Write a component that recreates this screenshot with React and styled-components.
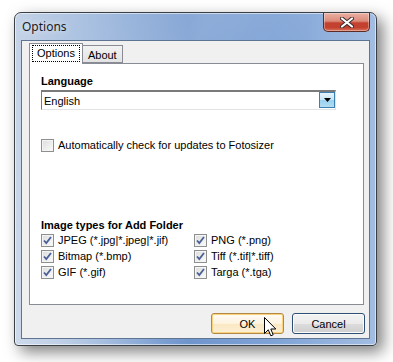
import React from 'react';
import styled, { createGlobalStyle } from 'styled-components';

const Global = createGlobalStyle`
  html, body { margin: 0; padding: 0; background: #fff; }
  body { font-family: "Liberation Sans", Arial, sans-serif; font-size: 11px; color: #000; }
`;

const Page = styled.div`
  padding: 12px 0 0 14px;
  height: 362px;
  box-sizing: border-box;
  overflow: hidden;
`;

const Window = styled.div`
  position: relative;
  width: 363px;
  height: 334px;
  box-sizing: border-box;
  border: 1px solid #3b3f46;
  border-radius: 7px 7px 4px 4px;
  background:
    linear-gradient(115deg, rgba(255,255,255,0) 0%, rgba(255,255,255,0.2) 38%, rgba(255,255,255,0) 58%),
    linear-gradient(90deg, #c4d3e7 0%, #9fb9dd 22%, #6f95cd 48%, #7fa3d6 72%, #a3bde2 100%);
  box-shadow: inset 0 0 0 1px rgba(255,255,255,0.55), 6px 6px 15px rgba(0,0,0,0.5);
  display: flex;
  flex-direction: column;
  padding: 0 6px 6px 6px;
`;

const TitleBar = styled.div`
  height: 28px;
  display: flex;
  align-items: flex-start;
  justify-content: space-between;
`;

const Title = styled.span`
  font-family: "Noto Sans", "Open Sans", sans-serif;
  font-size: 12px;
  color: #1a1a1a;
  margin: 5px 0 0 1px;
  text-shadow: 0 0 6px rgba(255,255,255,0.9);
`;

const CloseButton = styled.div`
  width: 47px;
  height: 19px;
  box-sizing: border-box;
  border: 1px solid #5e2a24;
  border-top: none;
  border-radius: 0 0 5px 5px;
  background: linear-gradient(#eab0a2 0%, #dc8b7a 45%, #c4412f 55%, #c2412e 80%, #d8735c 100%);
  box-shadow: inset 0 0 0 1px rgba(255,255,255,0.35);
  display: flex;
  align-items: center;
  justify-content: center;
`;

const Client = styled.div`
  flex: 1;
  border: 1px solid #5f7393;
  background: #f0f0f0;
  display: flex;
  flex-direction: column;
  padding: 1px 4px 4px 7px;
`;

const TabStrip = styled.div`
  display: flex;
  align-items: flex-end;
  height: 21px;
  position: relative;
  z-index: 1;
`;

const Tab = styled.div`
  box-sizing: border-box;
  height: ${p => (p.$active ? '21px' : '18px')};
  margin-bottom: ${p => (p.$active ? '-1px' : '0')};
  padding: ${p => (p.$active ? '2px 3px 0' : '2px 5px 0')};
  border: 1px solid #898c95;
  border-bottom: ${p => (p.$active ? 'none' : '1px solid #898c95')};
  border-left: ${p => (p.$first ? '1px solid #898c95' : 'none')};
  background: ${p => (p.$active ? '#fff' : 'linear-gradient(#f2f2f2, #e3e3e3)')};
  font-size: 11px;
  line-height: 14px;
`;

const Focus = styled.span`
  display: inline-block;
  outline: 1px dotted #000;
  padding: 0 4px;
  line-height: 15px;
`;

const Panel = styled.div`
  width: 335px;
  height: 242px;
  box-sizing: border-box;
  border: 1px solid #898c95;
  background: #fff;
  padding: 10px 0 0 11px;
`;

const Label = styled.div`
  font-weight: bold;
  line-height: 14px;
  margin-top: ${p => p.$top || 0}px;
`;

const Combo = styled.div`
  margin-top: 2px;
  width: 295px;
  height: 20px;
  box-sizing: border-box;
  border: 1px solid #e3e3e3;
  border-top-color: #7a7a7a;
  border-left-color: #7a7a7a;
  border-top-width: 2px;
  display: flex;
  align-items: center;
  justify-content: space-between;
  padding-left: 2px;
`;

const DropButton = styled.div`
  width: 16px;
  height: 16px;
  box-sizing: border-box;
  border: 1px solid #3c7fb1;
  background: linear-gradient(#e5f4fc, #c4e5f6 50%, #98d1ef 51%, #b3dcf2);
  display: flex;
  align-items: center;
  justify-content: center;
  margin-top: -1px;
`;

const Check = styled.label`
  display: flex;
  align-items: center;
  gap: 4px;
  height: 16px;
  white-space: nowrap;
  margin-top: ${p => p.$top || 0}px;
`;

const Box = styled.span`
  width: 13px;
  height: 13px;
  box-sizing: border-box;
  border: 1px solid #8e8f8f;
  background: linear-gradient(135deg, #dcdcdc, #fbfbfb);
  box-shadow: inset 0 0 0 1px #f4f4f4;
  display: flex;
  align-items: center;
  justify-content: center;
  flex: none;
`;

const Grid = styled.div`
  display: grid;
  grid-template-columns: 153px 140px;
`;

const Buttons = styled.div`
  display: flex;
  justify-content: flex-end;
  gap: 8px;
  margin-top: 8px;
  position: relative;
`;

const Button = styled.div`
  width: 73px;
  height: 21px;
  box-sizing: border-box;
  border: 1px solid ${p => (p.$default ? '#b28a47' : '#2f4e73')};
  border-radius: 3px;
  background: ${p => (p.$default
    ? 'linear-gradient(#fefcf7, #fdf3df 50%, #fbe8c2 51%, #fbefd4)'
    : 'linear-gradient(#f3f3f3, #ebebeb 50%, #dddddd 51%, #cfcfcf)')};
  box-shadow: ${p => (p.$default ? 'inset 0 0 0 1px #fbd17b' : 'inset 0 0 0 1px #fcfcfc')};
  display: flex;
  align-items: center;
  justify-content: center;
  font-size: 11px;
`;

const Cursor = styled.svg`
  position: absolute;
  left: 235px;
  top: 4px;
`;

const CheckMark = () => (
  <svg width="9" height="9" viewBox="0 0 9 9">
    <path d="M1 4.5 L3.3 7 L8 1" fill="none" stroke="#4a5f97" strokeWidth="1.8" />
  </svg>
);

const CheckItem = ({ checked, children, top }) => (
  <Check $top={top}>
    <Box>{checked && <CheckMark />}</Box>
    <span>{children}</span>
  </Check>
);

const types = [
  'JPEG (*.jpg|*.jpeg|*.jif)', 'PNG (*.png)',
  'Bitmap (*.bmp)', 'Tiff (*.tif|*.tiff)',
  'GIF (*.gif)', 'Targa (*.tga)',
];

export default function App() {
  return (
    <Page>
      <Global />
      <Window>
        <TitleBar>
          <Title>Options</Title>
          <CloseButton>
            <svg width="14" height="11" viewBox="0 0 14 11">
              <path d="M2 1.5 L12 9.5 M12 1.5 L2 9.5" stroke="#3a2a2a" strokeWidth="4" strokeLinecap="round" />
              <path d="M2 1.5 L12 9.5 M12 1.5 L2 9.5" stroke="#fff" strokeWidth="2.2" strokeLinecap="round" />
            </svg>
          </CloseButton>
        </TitleBar>
        <Client>
          <TabStrip>
            <Tab $active $first><Focus>Options</Focus></Tab>
            <Tab>About</Tab>
          </TabStrip>
          <Panel>
            <Label>Language</Label>
            <Combo>
              <span>English</span>
              <DropButton>
                <svg width="7" height="4" viewBox="0 0 7 4"><path d="M0 0 H7 L3.5 4 Z" fill="#000" /></svg>
              </DropButton>
            </Combo>
            <CheckItem top={27}>Automatically check for updates to Fotosizer</CheckItem>
            <Label $top={65}>Image types for Add Folder</Label>
            <Grid>
              {types.map(t => <CheckItem key={t} checked>{t}</CheckItem>)}
            </Grid>
          </Panel>
          <Buttons>
            <Button $default>OK</Button>
            <Button>Cancel</Button>
            <Cursor width="13" height="21" viewBox="0 0 13 21">
              <path d="M0.5 0.5 V16.5 L4.3 12.8 L6.8 18.8 L9.2 17.8 L6.8 12 H11.8 Z" fill="#fff" stroke="#000" strokeWidth="1" strokeLinejoin="round" />
            </Cursor>
          </Buttons>
        </Client>
      </Window>
    </Page>
  );
}
